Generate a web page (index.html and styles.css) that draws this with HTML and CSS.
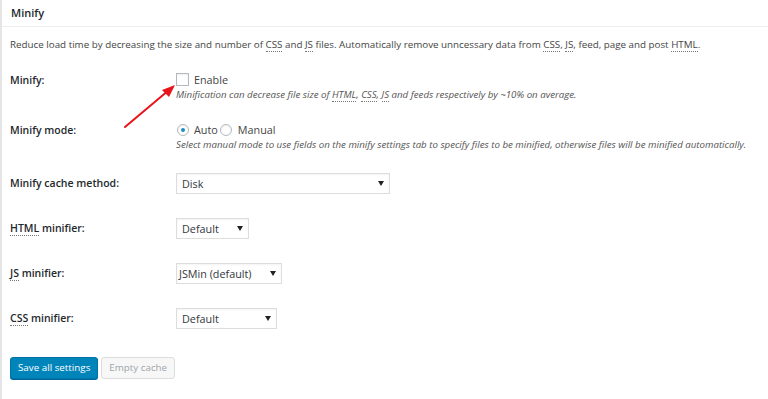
FILE: index.html
```html
<!DOCTYPE html>
<html>
<head>
<meta charset="utf-8">
<link rel="stylesheet" href="styles.css">
</head>
<body>
<div class="box">
  <div class="box-head">Minify</div>
  <p class="intro">Reduce load time by decreasing the size and number of <abbr>CSS</abbr> and <abbr>JS</abbr> files. Automatically remove unncessary data from <abbr>CSS</abbr>, <abbr>JS</abbr>, feed, page and post <abbr>HTML</abbr>.</p>

  <div class="form">
    <div class="row r1">
      <div class="label">Minify:</div>
      <div class="field">
        <div class="opt"><span class="check"></span><span class="opt-text">Enable</span></div>
        <div class="desc">Minification can decrease file size of <abbr>HTML</abbr>, <abbr>CSS</abbr>, <abbr>JS</abbr> and feeds respectively by ~10% on average.</div>
      </div>
    </div>

    <div class="row r2">
      <div class="label">Minify mode:</div>
      <div class="field">
        <div class="opt"><span class="radio on"></span><span class="opt-text">Auto</span><span class="radio"></span><span class="opt-text">Manual</span></div>
        <div class="desc">Select manual mode to use fields on the minify settings tab to specify files to be minified, otherwise files will be minified automatically.</div>
      </div>
    </div>

    <div class="row sel-row r3">
      <div class="label">Minify cache method:</div>
      <div class="field"><div class="select w-disk"><span>Disk</span><span class="arrow"></span></div></div>
    </div>

    <div class="row sel-row">
      <div class="label"><abbr>HTML</abbr> minifier:</div>
      <div class="field"><div class="select w-html"><span>Default</span><span class="arrow"></span></div></div>
    </div>

    <div class="row sel-row">
      <div class="label"><abbr>JS</abbr> minifier:</div>
      <div class="field"><div class="select w-js"><span class="js-text">JSMin (default)</span><span class="arrow"></span></div></div>
    </div>

    <div class="row sel-row">
      <div class="label"><abbr>CSS</abbr> minifier:</div>
      <div class="field"><div class="select w-css"><span>Default</span><span class="arrow"></span></div></div>
    </div>
  </div>

  <div class="actions">
    <button class="btn primary">Save all settings</button>
    <button class="btn disabled">Empty cache</button>
  </div>

  <svg class="pointer" width="60" height="50" viewBox="0 0 60 50">
    <line x1="3" y1="45" x2="47" y2="8" stroke="#e8141a" stroke-width="2" stroke-linecap="round"/>
    <polygon points="53,3 40,8 47,15" fill="#e8141a"/>
  </svg>
</div>
</body>
</html>
```

FILE: styles.css
```css
html, body {
  margin: 0;
  padding: 0;
  background: #fff;
}
body {
  font-family: "Open Sans", "Liberation Sans", sans-serif;
  font-size: 11px;
  color: #444;
  width: 768px;
  height: 399px;
  overflow: hidden;
}
.box {
  position: relative;
  border-left: 2px solid #e5e5e5;
  height: 399px;
  box-sizing: border-box;
}
.box-head {
  height: 26px;
  line-height: 26px;
  padding-left: 9px;
  font-weight: 600;
  font-size: 11px;
  color: #23282d;
  border-bottom: 1px solid #eee;
}
abbr {
  text-decoration: none;
  border-bottom: 1px dotted #777;
}
.intro {
  margin: 10px 0 0 8px;
  line-height: 15px;
  font-size: 9.8px;
  white-space: nowrap;
}
.form {
  padding-left: 8px;
}
.row {
  display: flex;
  align-items: flex-start;
}
.r1 { margin-top: 20px; }
.r2 { margin-top: 20px; }
.r3 { margin-top: 21px; }
.sel-row { align-items: center; }
.sel-row + .sel-row { margin-top: 24px; }
.label {
  width: 166px;
  flex: none;
  font-weight: 600;
  font-size: 10.5px;
  color: #23282d;
  line-height: 15px;
  padding-top: 1px;
}
.sel-row .label { padding-top: 0; }
.field {
  line-height: 15px;
}
.opt {
  display: flex;
  align-items: center;
  height: 15px;
}
.opt-text {
  font-size: 10.8px;
  color: #444;
}
.check {
  width: 11px;
  height: 11px;
  border: 1px solid #b4b9be;
  background: #fff;
  margin-right: 5px;
  box-shadow: inset 0 1px 2px rgba(0,0,0,0.07);
}
.radio {
  width: 10px;
  height: 10px;
  border: 1px solid #b4b9be;
  border-radius: 50%;
  margin: 0 5px 0 1px;
  position: relative;
  box-shadow: inset 0 1px 2px rgba(0,0,0,0.07);
}
.radio.on::after {
  content: "";
  position: absolute;
  left: 3px;
  top: 3px;
  width: 4px;
  height: 4px;
  border-radius: 50%;
  background: #1e8cbe;
}
.opt-text + .radio { margin-left: 2px; margin-right: 6px; }
.desc {
  font-style: italic;
  color: #555;
  font-size: 9.7px;
  white-space: nowrap;
}
.select {
  display: flex;
  justify-content: space-between;
  align-items: center;
  height: 21px;
  box-sizing: border-box;
  border: 1px solid #ddd;
  padding: 0 5px 0 5px;
  box-shadow: inset 0 1px 2px rgba(0,0,0,0.05);
  color: #32373c;
  font-size: 10.8px;
}
.js-text { margin-left: -3px; }
.arrow {
  width: 0;
  height: 0;
  border-left: 3px solid transparent;
  border-right: 3px solid transparent;
  border-top: 5px solid #222;
}
.w-disk { width: 214px; }
.w-html { width: 73px; }
.w-js { width: 106px; }
.w-css { width: 101px; }
.actions {
  display: flex;
  gap: 3px;
  margin: 28px 0 0 8px;
}
.btn {
  font-family: "Open Sans", "Liberation Sans", sans-serif;
  font-size: 9.8px;
  height: 22px;
  line-height: 20px;
  padding: 0 7px;
  border-radius: 3px;
  box-sizing: border-box;
}
.primary {
  background: #0085ba;
  border: 1px solid #0073aa;
  color: #fff;
  box-shadow: 0 1px 0 #006799;
}
.disabled {
  background: #f7f7f7;
  border: 1px solid #ddd;
  color: #a0a5aa;
}
.pointer {
  position: absolute;
  left: 120px;
  top: 82px;
}
```
